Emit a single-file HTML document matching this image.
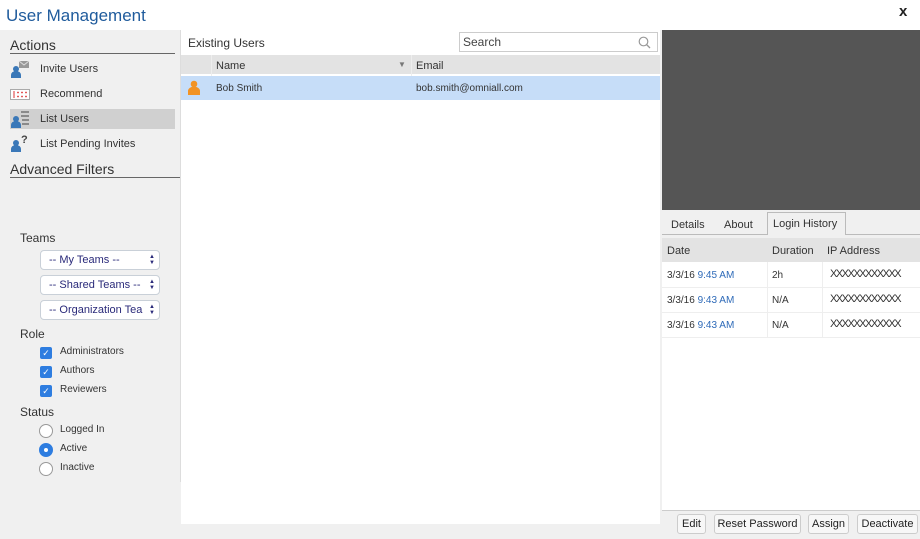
<!DOCTYPE html>
<html><head><style>
*{box-sizing:border-box;margin:0;padding:0}
body{width:920px;height:539px;overflow:hidden;background:#f0f0f0;font-family:"Liberation Sans","DejaVu Sans",sans-serif;position:relative;color:#333}
.a{position:absolute}
.t{font-size:11px;white-space:nowrap}
.ic{position:absolute;left:10px;width:20px;height:18px}
.sel{background:#fff;border:1px solid #c9d0d8;border-radius:4px;height:20px;width:120px;left:40px;font-size:11px;color:#2a2a7a;padding:3px 0 0 8px}
.ar{position:absolute;right:4px;top:3px;font-size:6px;line-height:6px;color:#2a2a7a}
.cb{position:absolute;left:40px;width:12px;height:12px;background:#2e7de0;border-radius:2px;color:#fff;font-size:9px;text-align:center;line-height:12px}
.rd{position:absolute;left:39px;width:14px;height:14px;border:1px solid #999;border-radius:50%;background:#fff}
.btn{position:absolute;top:514px;height:20px;border:1px solid #ccc;border-radius:3px;background:#f7f7f7;font-size:11px;text-align:center;line-height:18px;color:#222}
</style></head><body>
<div class="a" style="left:0;top:0;width:920px;height:30px;background:#fff"></div>
<div class="a" style="left:6px;top:6px;font-size:17px;color:#1f5b9c">User Management</div>
<div class="a" style="left:899px;top:3px;font-size:15px;font-weight:bold;color:#222">x</div>

<div class="a" style="left:10px;top:37px;font-size:14px">Actions</div>
<div class="a" style="left:10px;top:53px;width:165px;height:1px;background:#666"></div>
<svg class="ic" style="top:60px" viewBox="0 0 20 18"><rect x="9" y="1" width="10" height="7" fill="#999"/><path d="M9 1l5 4 5-4" stroke="#ddd" fill="none"/><circle cx="6" cy="9" r="3" fill="#3a78b8"/><path d="M1 18v-3a5 4 0 0 1 10 0v3z" fill="#3a78b8"/></svg>
<div class="a t" style="left:40px;top:63px">Invite Users</div>
<svg class="ic" style="top:86px" viewBox="0 0 20 18"><rect x="0.5" y="3.5" width="19" height="10" fill="#fff" stroke="#aaa"/><line x1="4" y1="5" x2="4" y2="12" stroke="#d33"/><g fill="#d33"><circle cx="8" cy="6.5" r=".9"/><circle cx="12" cy="6.5" r=".9"/><circle cx="16" cy="6.5" r=".9"/><circle cx="8" cy="10.5" r=".9"/><circle cx="12" cy="10.5" r=".9"/><circle cx="16" cy="10.5" r=".9"/></g></svg>
<div class="a t" style="left:40px;top:88px">Recommend</div>
<div class="a" style="left:10px;top:109px;width:165px;height:20px;background:#d0d0d0"></div>
<svg class="ic" style="top:110px" viewBox="0 0 20 18"><g stroke="#444"><line x1="11" y1="2" x2="19" y2="2"/><line x1="11" y1="6" x2="19" y2="6"/><line x1="12" y1="10" x2="19" y2="10"/><line x1="12" y1="14" x2="19" y2="14"/></g><circle cx="6" cy="9" r="3" fill="#3a78b8"/><path d="M1 18v-3a5 4 0 0 1 10 0v3z" fill="#3a78b8"/></svg>
<div class="a t" style="left:40px;top:113px">List Users</div>
<svg class="ic" style="top:134px" viewBox="0 0 20 18"><text x="11" y="9" font-size="11" font-weight="bold" fill="#444" font-family="Liberation Sans">?</text><circle cx="6" cy="9" r="3" fill="#3a78b8"/><path d="M1 18v-3a5 4 0 0 1 10 0v3z" fill="#3a78b8"/></svg>
<div class="a t" style="left:40px;top:138px">List Pending Invites</div>
<div class="a" style="left:10px;top:161px;font-size:14px">Advanced Filters</div>
<div class="a" style="left:10px;top:177px;width:170px;height:1px;background:#666"></div>

<div class="a" style="left:20px;top:231px;font-size:12px">Teams</div>
<div class="a sel" style="top:250px">-- My Teams --<div class="ar">▲<br>▼</div></div>
<div class="a sel" style="top:275px">-- Shared Teams --<div class="ar">▲<br>▼</div></div>
<div class="a sel" style="top:300px">-- Organization Tea<div class="ar">▲<br>▼</div></div>
<div class="a" style="left:20px;top:327px;font-size:12px">Role</div>
<div class="cb" style="top:347px">✓</div><div class="a t" style="left:60px;top:346px;font-size:10px">Administrators</div>
<div class="cb" style="top:366px">✓</div><div class="a t" style="left:60px;top:365px;font-size:10px">Authors</div>
<div class="cb" style="top:385px">✓</div><div class="a t" style="left:60px;top:384px;font-size:10px">Reviewers</div>
<div class="a" style="left:20px;top:405px;font-size:12px">Status</div>
<div class="rd" style="top:424px"></div><div class="a t" style="left:60px;top:424px;font-size:10px">Logged In</div>
<div class="rd" style="top:443px;background:#2e7de0;border-color:#2e7de0"><div style="width:4px;height:4px;background:#fff;border-radius:50%;margin:4px"></div></div><div class="a t" style="left:60px;top:443px;font-size:10px">Active</div>
<div class="rd" style="top:462px"></div><div class="a t" style="left:60px;top:462px;font-size:10px">Inactive</div>

<div class="a" style="left:180px;top:30px;width:1px;height:452px;background:#ddd"></div>
<div class="a" style="left:181px;top:30px;width:479px;height:494px;background:#fff"></div>
<div class="a" style="left:188px;top:36px;font-size:12px">Existing Users</div>
<div class="a" style="left:459px;top:32px;width:199px;height:20px;border:1px solid #ccc;background:#fff;font-size:12px;padding:2px 0 0 3px;color:#444">Search
<svg style="position:absolute;right:6px;top:3px" width="13" height="13" viewBox="0 0 13 13"><circle cx="5.5" cy="5.5" r="4.3" fill="none" stroke="#999" stroke-width="1.2"/><line x1="8.5" y1="8.5" x2="12" y2="12" stroke="#999" stroke-width="1.3"/></svg></div>
<div class="a" style="left:181px;top:55px;width:479px;height:19px;background:#e3e3e3"></div>
<div class="a" style="left:211px;top:55px;width:1px;height:44px;background:#eee"></div>
<div class="a" style="left:411px;top:55px;width:1px;height:44px;background:#eee"></div>
<div class="a t" style="left:216px;top:60px">Name</div>
<div class="a" style="left:398px;top:60px;font-size:8px;color:#777">▼</div>
<div class="a t" style="left:416px;top:60px">Email</div>
<div class="a" style="left:181px;top:76px;width:479px;height:24px;background:#c6ddf8"></div>
<svg class="a" style="left:187px;top:79px" width="14" height="16" viewBox="0 0 14 16"><circle cx="7" cy="5" r="3.3" fill="#f29324"/><path d="M1 16v-4a6 4.5 0 0 1 12 0v4z" fill="#f29324"/></svg>
<div class="a t" style="left:216px;top:83px;font-size:10px">Bob Smith</div>
<div class="a t" style="left:416px;top:83px;font-size:10px">bob.smith@omniall.com</div>

<div class="a" style="left:662px;top:30px;width:258px;height:180px;background:#555"></div>
<div class="a" style="left:662px;top:234px;width:258px;height:1px;background:#bbb"></div>
<div class="a t" style="left:671px;top:219px">Details</div>
<div class="a t" style="left:724px;top:219px">About</div>
<div class="a t" style="left:767px;top:212px;width:79px;height:23px;border:1px solid #bbb;border-bottom:none;background:#f0f0f0;padding:5px 0 0 5px">Login History</div>
<div class="a" style="left:662px;top:238px;width:258px;height:24px;background:#e3e3e3"></div>
<div class="a t" style="left:667px;top:245px">Date</div>
<div class="a t" style="left:772px;top:245px">Duration</div>
<div class="a t" style="left:827px;top:245px">IP Address</div>
<div class="a" style="left:662px;top:262px;width:258px;height:248px;background:#fff"></div>
<div class="a" style="left:662px;top:287px;width:258px;height:1px;background:#eee"></div>
<div class="a" style="left:662px;top:312px;width:258px;height:1px;background:#eee"></div>
<div class="a" style="left:662px;top:337px;width:258px;height:1px;background:#eee"></div>
<div class="a" style="left:767px;top:262px;width:1px;height:75px;background:#eee"></div>
<div class="a" style="left:822px;top:262px;width:1px;height:75px;background:#eee"></div>
<div class="a t" style="left:667px;top:270px;font-size:10px">3/3/16 <span style="color:#2e6ab8">9:45 AM</span></div>
<div class="a t" style="left:772px;top:270px;font-size:10px">2h</div>
<div class="a t" style="left:830px;top:268px;font-size:11px;letter-spacing:-1.5px">XXXXXXXXXXXX</div>
<div class="a t" style="left:667px;top:295px;font-size:10px">3/3/16 <span style="color:#2e6ab8">9:43 AM</span></div>
<div class="a t" style="left:772px;top:295px;font-size:10px">N/A</div>
<div class="a t" style="left:830px;top:293px;font-size:11px;letter-spacing:-1.5px">XXXXXXXXXXXX</div>
<div class="a t" style="left:667px;top:320px;font-size:10px">3/3/16 <span style="color:#2e6ab8">9:43 AM</span></div>
<div class="a t" style="left:772px;top:320px;font-size:10px">N/A</div>
<div class="a t" style="left:830px;top:318px;font-size:11px;letter-spacing:-1.5px">XXXXXXXXXXXX</div>
<div class="a" style="left:662px;top:510px;width:258px;height:29px;background:#f0f0f0;border-top:1px solid #ccc"></div>
<div class="btn" style="left:677px;width:29px">Edit</div>
<div class="btn" style="left:714px;width:87px">Reset Password</div>
<div class="btn" style="left:808px;width:41px">Assign</div>
<div class="btn" style="left:857px;width:61px">Deactivate</div>
</body></html>
